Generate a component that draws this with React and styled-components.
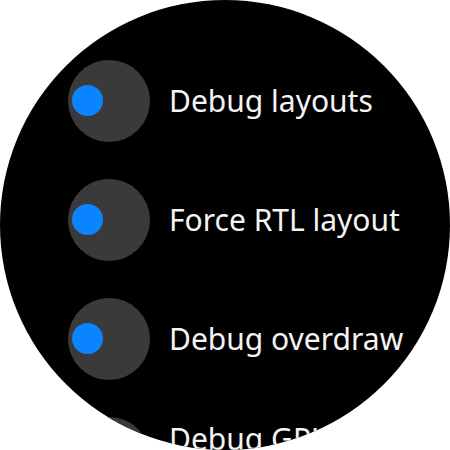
import React from "react";
import styled, { createGlobalStyle } from "styled-components";

const Global = createGlobalStyle`
  html, body { margin: 0; padding: 0; background: #ffffff; }
  body { width: 450px; height: 450px; overflow: hidden; }
`;

const Watch = styled.div`
  width: 450px;
  height: 450px;
  border-radius: 50%;
  background: #000000;
  overflow: hidden;
`;

const List = styled.div`
  display: flex;
  flex-direction: column;
  padding-top: 41px;
  padding-left: 68px;
`;

const Row = styled.div`
  display: flex;
  align-items: center;
  gap: 19px;
  height: 119px;
  flex-shrink: 0;
`;

const Toggle = styled.div`
  width: 82px;
  height: 82px;
  border-radius: 50%;
  background: #3a3a3a;
  display: flex;
  align-items: center;
  justify-content: ${(p) => (p.$on ? "flex-start" : "flex-end")};
  padding: 0 4px;
  box-sizing: border-box;
  flex-shrink: 0;
`;

const Dot = styled.div`
  width: 31px;
  height: 31px;
  border-radius: 50%;
  background: ${(p) => (p.$on ? "#0a84ff" : "#8a8a8a")};
`;

const Label = styled.span`
  font-family: "Noto Sans", "Open Sans", sans-serif;
  font-size: 30px;
  line-height: 38px;
  color: #f4f4f4;
  max-width: 236px;
`;

const items = [
  { label: "Debug layouts", on: true },
  { label: "Force RTL layout", on: true },
  { label: "Debug overdraw", on: true },
  { label: "Debug GPU overdraw", on: true },
];

export default function App() {
  return (
    <>
      <Global />
      <Watch>
        <List>
          {items.map((it) => (
            <Row key={it.label}>
              <Toggle $on={it.on}>
                <Dot $on={it.on} />
              </Toggle>
              <Label>{it.label}</Label>
            </Row>
          ))}
        </List>
      </Watch>
    </>
  );
}
